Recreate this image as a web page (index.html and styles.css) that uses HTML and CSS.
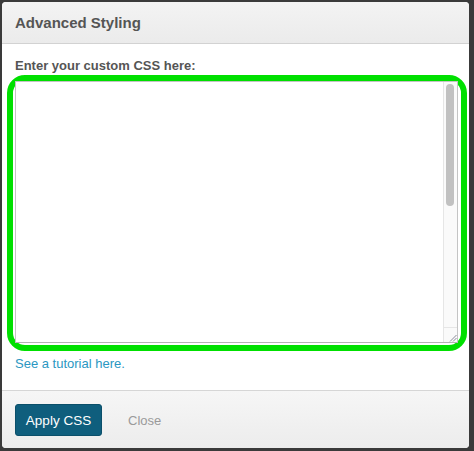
FILE: index.html
```html
<!DOCTYPE html>
<html>
<head>
<meta charset="utf-8">
<link rel="stylesheet" href="styles.css">
</head>
<body>
<div class="modal">
  <div class="modal-header">
    <h3 class="modal-title">Advanced Styling</h3>
  </div>
  <div class="modal-body">
    <label class="field-label">Enter your custom CSS here:</label>
    <div class="highlight">
      <div class="code-area">
        <div class="code-input"></div>
        <div class="scrollbar">
          <div class="scroll-track"><div class="scroll-thumb"></div></div>
          <div class="scroll-corner">
            <svg class="grip" width="8" height="8" viewBox="0 0 8 8">
              <line x1="1" y1="7.5" x2="7.5" y2="1" stroke="#8a8a9a" stroke-width="1"/>
              <line x1="4" y1="7.5" x2="7.5" y2="4" stroke="#8a8a9a" stroke-width="1"/>
            </svg>
          </div>
        </div>
      </div>
    </div>
    <a class="tutorial-link" href="#">See a tutorial here.</a>
  </div>
  <div class="modal-footer">
    <button class="btn-primary">Apply CSS</button>
    <button class="btn-link">Close</button>
  </div>
</div>
</body>
</html>
```

FILE: styles.css
```css
html, body {
  margin: 0;
  height: 100%;
}
body {
  background: #3a3a3a;
  padding: 2px 5px 3px 2px;
  box-sizing: border-box;
  font-family: "Liberation Sans", Arial, sans-serif;
  overflow: hidden;
}
.modal {
  height: 100%;
  background: #fff;
  border-radius: 4px;
  display: flex;
  flex-direction: column;
  overflow: hidden;
}
.modal-header {
  height: 41px;
  flex: none;
  display: flex;
  align-items: center;
  padding: 0 13px;
  background: linear-gradient(#f3f3f3, #ebebeb);
  border-bottom: 1px solid #d2d2d2;
}
.modal-title {
  margin: 0;
  font-size: 15px;
  font-weight: bold;
  color: #555;
}
.modal-body {
  flex: 1;
  padding: 13px 13px 0 13px;
  display: flex;
  flex-direction: column;
}
.field-label {
  font-size: 13px;
  font-weight: bold;
  color: #555;
  line-height: 18px;
  margin-bottom: 0;
}
.highlight {
  margin: 0 -11px 0 -8px;
  border: 6px solid #00e000;
  border-radius: 18px;
  padding: 0 3px 2px 2px;
}
.code-area {
  height: 262px;
  box-sizing: border-box;
  border: 1px solid #c4c4c4;
  border-bottom-color: #b4b4b4;
  display: flex;
  background: #fff;
}
.code-input {
  flex: 1;
}
.scrollbar {
  width: 13px;
  display: flex;
  flex-direction: column;
  border-left: 1px solid #e6e6e6;
  background: #fafafa;
}
.scroll-track {
  flex: 1;
  padding: 2px 2px 0 2px;
}
.scroll-thumb {
  height: 122px;
  width: 8px;
  background: #c1c1c1;
  border-radius: 4px;
}
.scroll-corner {
  height: 14px;
  border-top: 1px solid #e6e6e6;
  display: flex;
  align-items: flex-end;
  justify-content: flex-end;
}
.grip {
  display: block;
}
.tutorial-link {
  margin-top: 4px;
  font-size: 13px;
  line-height: 18px;
  color: #2a97c2;
  text-decoration: none;
}
.modal-footer {
  height: 58px;
  flex: none;
  box-sizing: border-box;
  border-top: 1px solid #d6d6d6;
  background: linear-gradient(#f6f6f6, #ececec);
  padding: 13px 13px 0 13px;
  display: flex;
  align-items: flex-start;
}
.btn-primary {
  height: 32px;
  width: 87px;
  background: #0f5e7d;
  color: #fff;
  border: 1px solid #0b4f6a;
  border-radius: 3px;
  font-family: "Liberation Sans", Arial, sans-serif;
  font-size: 13.5px;
  padding: 0;
}
.btn-link {
  margin-left: 26px;
  height: 32px;
  background: none;
  border: none;
  padding: 0;
  color: #9a9a9a;
  font-family: "Liberation Sans", Arial, sans-serif;
  font-size: 13px;
}
```
